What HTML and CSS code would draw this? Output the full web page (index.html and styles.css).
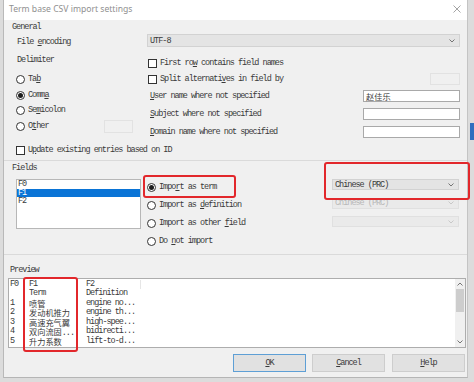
FILE: index.html
```html
<!DOCTYPE html>
<html>
<head>
<meta charset="utf-8">
<link rel="stylesheet" href="styles.css">
</head>
<body>
<div class="screen">
  <div class="dialog">
    <div class="titlebar">
      <span class="title">Term base CSV import settings</span>
      <svg class="close" width="8" height="8" viewBox="0 0 8 8"><path d="M0.5 0.5L7.5 7.5M7.5 0.5L0.5 7.5" stroke="#9a9a9a" stroke-width="0.9" fill="none"/></svg>
    </div>
    <div class="content">
      <div class="group-label general-label"><span>General</span></div>
      <div class="general">
        <div class="gcol-left">
          <div class="lrow h16 pl1"><span>File <u>e</u>ncoding</span></div>
          <div class="lrow h20 pl1"><span>Delimiter</span></div>
          <div class="lrow h18"><span class="radio"></span><span>Ta<u>b</u></span></div>
          <div class="lrow h14"><span class="radio checked"></span><span>Comm<u>a</u></span></div>
          <div class="lrow h16"><span class="radio"></span><span>Se<u>m</u>icolon</span></div>
          <div class="lrow h16"><span class="radio"></span><span>O<u>t</u>her</span><span class="mini-input other-input"></span></div>
        </div>
        <div class="gcol-right">
          <div class="select enc-select"><span class="sel-text">UTF-8</span><svg class="chev" width="6" height="4" viewBox="0 0 6 4"><path d="M0.5 0.5L3 3L5.5 0.5" stroke="#666" stroke-width="0.9" fill="none"/></svg></div>
          <div class="lrow h16 mt8"><span class="check"></span><span>First ro<u>w</u> contains field names</span></div>
          <div class="lrow h16"><span class="check"></span><span>Split alternati<u>v</u>es in field by</span><span class="mini-input split-input"></span></div>
          <div class="lrow h18 pl3"><span class="flabel"><u>U</u>ser name where not specified</span><span class="text-input"><span class="zh">赵佳乐</span></span></div>
          <div class="lrow h18 pl3"><span class="flabel"><u>S</u>ubject where not specified</span><span class="text-input"></span></div>
          <div class="lrow h18 pl3"><span class="flabel"><u>D</u>omain name where not specified</span><span class="text-input"></span></div>
        </div>
      </div>
      <div class="lrow h16 update-row"><span class="check"></span><span>U<u>p</u>date existing entries based on ID</span></div>
      <div class="sep sep-a"></div>
      <div class="group-label fields-label"><span>Fields</span></div>
      <div class="fields">
        <div class="listbox">
          <div class="item">F0</div>
          <div class="item selected">F1</div>
          <div class="item">F2</div>
        </div>
        <div class="radios">
          <div class="lrow h18"><span class="radio checked"></span><span>Impo<u>r</u>t as term</span></div>
          <div class="lrow h18"><span class="radio"></span><span>Import as <u>d</u>efinition</span></div>
          <div class="lrow h18"><span class="radio"></span><span>Import as other <u>f</u>ield</span></div>
          <div class="lrow h18"><span class="radio"></span><span>Do <u>n</u>ot import</span></div>
        </div>
        <div class="selects">
          <div class="select lang"><span class="sel-text">Chinese (PRC)</span><svg class="chev" width="6" height="4" viewBox="0 0 6 4"><path d="M0.5 0.5L3 3L5.5 0.5" stroke="#666" stroke-width="0.9" fill="none"/></svg></div>
          <div class="select lang disabled"><span class="sel-text">Chinese (PRC)</span><svg class="chev" width="6" height="4" viewBox="0 0 6 4"><path d="M0.5 0.5L3 3L5.5 0.5" stroke="#c4c4c4" stroke-width="0.9" fill="none"/></svg></div>
          <div class="select lang disabled"><span class="sel-text"></span><svg class="chev" width="6" height="4" viewBox="0 0 6 4"><path d="M0.5 0.5L3 3L5.5 0.5" stroke="#c4c4c4" stroke-width="0.9" fill="none"/></svg></div>
        </div>
      </div>
      <div class="sep sep-b"></div>
      <div class="group-label preview-label"><span>Preview</span></div>
      <div class="preview">
        <div class="pv-grid">
          <div class="pv-row head"><span class="c0">F0</span><span class="c1">F1</span><span class="c2">F2</span></div>
          <div class="pv-row"><span class="c0"></span><span class="c1">Term</span><span class="c2">Definition</span></div>
          <div class="pv-row"><span class="c0">1</span><span class="c1 zh">喷管</span><span class="c2">engine no...</span></div>
          <div class="pv-row"><span class="c0">2</span><span class="c1 zh">发动机推力</span><span class="c2">engine th...</span></div>
          <div class="pv-row"><span class="c0">3</span><span class="c1 zh">高速充气翼</span><span class="c2">high-spee...</span></div>
          <div class="pv-row"><span class="c0">4</span><span class="c1"><span class="zh">双向流固</span>...</span><span class="c2">bidirecti...</span></div>
          <div class="pv-row"><span class="c0">5</span><span class="c1 zh">升力系数</span><span class="c2">lift-to-d...</span></div>
        </div>
        <div class="scrollbar">
          <svg class="sb-arrow" width="6" height="4" viewBox="0 0 6 4"><path d="M0.5 3.5L3 1L5.5 3.5" stroke="#666" stroke-width="0.9" fill="none"/></svg>
          <div class="thumb"></div>
          <div class="sb-space"></div>
          <svg class="sb-arrow" width="6" height="4" viewBox="0 0 6 4"><path d="M0.5 0.5L3 3L5.5 0.5" stroke="#666" stroke-width="0.9" fill="none"/></svg>
        </div>
      </div>
      <div class="buttons">
        <div class="btn default"><span><u>O</u>K</span></div>
        <div class="btn cancel"><span><u>C</u>ancel</span></div>
        <div class="btn help"><span><u>H</u>elp</span></div>
      </div>
    </div>
  </div>
  <div class="bg-blue"></div>
  <div class="mark mark1"></div>
  <div class="mark mark2"></div>
  <div class="mark mark3"></div>
</div>
</body>
</html>
```
FILE: styles.css
```css
* { box-sizing: border-box; }
html, body { margin: 0; padding: 0; }
body {
  width: 474px;
  height: 382px;
  overflow: hidden;
  background: #dcdcdc;
  font-family: "Liberation Mono", "Noto Sans CJK SC", monospace;
  font-size: 8.5px;
  letter-spacing: -1px;
  color: #3a3a3a;
}
u { text-decoration: underline; text-underline-offset: 1px; }
.zh { font-family: "Noto Sans CJK SC", sans-serif; letter-spacing: 0; font-size: 8.2px; }
.screen {
  position: relative;
  width: 474px;
  height: 382px;
  padding-left: 3px;
}
.screen::before {
  content: "";
  position: absolute;
  left: 3px; top: 0; width: 1px; height: 378px;
  background: #b9b9b9;
}
.dialog {
  position: relative;
  margin-left: 1px;
  width: 464px;
  height: 378px;
  background: #f0f0f0;
  border-right: 1px solid #c4c4c4;
  border-bottom: 1px solid #b5b5b5;
}
.titlebar {
  height: 20px;
  background: #ffffff;
  display: flex;
  align-items: center;
  padding-left: 5px;
  padding-right: 6px;
  padding-bottom: 2px;
}
.title {
  font-family: "Noto Sans", sans-serif;
  font-size: 8.6px;
  letter-spacing: 0;
  color: #909090;
}
.close { margin-left: auto; }
.group-label {
  display: flex;
  align-items: center;
  padding-left: 8px;
}
.general-label { height: 14px; }
.general {
  display: flex;
  padding-left: 12px;
  height: 107px;
}
.gcol-left { width: 131px; display: flex; flex-direction: column; }
.gcol-right { width: 313px; display: flex; flex-direction: column; }
.lrow { display: flex; align-items: center; white-space: pre; }
.h14 { height: 14px; }
.h16 { height: 16px; }
.h18 { height: 18px; }
.h20 { height: 20px; }
.pl1 { padding-left: 1px; }
.pl3 { padding-left: 3px; }
.mt8 { margin-top: 8px; }
.radio {
  width: 9px; height: 9px;
  border: 1px solid #333;
  border-radius: 50%;
  background: #fff;
  margin-right: 3px;
  flex: none;
  display: flex; align-items: center; justify-content: center;
}
.radio.checked::after {
  content: "";
  width: 5px; height: 5px;
  border-radius: 50%;
  background: #1e1e1e;
}
.check {
  width: 9px; height: 9px;
  border: 1px solid #333;
  background: #fff;
  margin-left: 1px;
  margin-right: 3px;
  flex: none;
}
.mini-input {
  height: 13px;
  border: 1px solid #e2e2e2;
  background: #f0f0f0;
}
.other-input { width: 29px; margin-left: auto; margin-right: 14px; }
.split-input { width: 30px; height: 12px; margin-left: auto; }
.select {
  height: 13px;
  background: #e4e4e4;
  border: 1px solid #d2d2d2;
  display: flex;
  align-items: center;
  padding-left: 2px;
  padding-right: 4px;
}
.sel-text { color: #3a3a3a; white-space: pre; }
.select .chev { margin-left: auto; }
.flabel { flex: none; }
.text-input {
  margin-left: auto;
  width: 97px;
  height: 12px;
  background: #fff;
  border: 1px solid #a9a9a9;
  display: flex;
  align-items: center;
  padding-left: 2px;
}
.update-row { margin-top: 1px; padding-left: 11px; }
.sep { height: 1px; background: #dadada; }
.sep-a { margin-top: 2px; }
.fields-label { height: 14px; }
.fields {
  display: flex;
  height: 75px;
  padding-left: 12px;
  padding-right: 8px;
}
.listbox {
  margin-top: 4px;
  width: 125px;
  height: 50px;
  background: #fff;
  border: 1px solid #b7b7b7;
}
.item { height: 8.5px; line-height: 8.5px; padding-left: 1px; }
.item.selected { background: #0a74d6; color: #fff; }
.radios { margin-left: 6px; margin-top: 3px; display: flex; flex-direction: column; }
.selects {
  margin-left: auto;
  margin-top: 4px;
  width: 127px;
  display: flex;
  flex-direction: column;
  gap: 7.5px;
}
.select.lang { height: 11px; }
.select.disabled { background: #eaeaea; border-color: #e0e0e0; }
.select.disabled .sel-text { color: #b8b8b8; }
.sep-b { margin-top: 4px; }
.preview-label { height: 22px; padding-left: 6px; padding-top: 7px; }
.preview {
  margin-left: 4px;
  margin-top: 1px;
  width: 458px;
  height: 70px;
  background: #fff;
  border: 1px solid #adadad;
  display: flex;
  overflow: hidden;
}
.pv-grid { flex: 1; padding-top: 0.5px; padding-left: 1px; overflow: hidden; }
.pv-row { display: flex; height: 9.5px; line-height: 9.5px; white-space: pre; }
.c0 { width: 19px; flex: none; }
.c1 { width: 57px; flex: none; }
.c2 { width: 55px; flex: none; }
.head .c2 { border-right: 1px solid #e6e6e6; }
.scrollbar {
  width: 10px;
  flex: none;
  background: #f0f0f0;
  display: flex;
  flex-direction: column;
  align-items: center;
  padding-top: 3px;
  padding-bottom: 3px;
}
.thumb { width: 8px; height: 23px; background: #cdcdcd; margin-top: 3px; }
.sb-space { flex: 1; }
.buttons {
  display: flex;
  justify-content: flex-end;
  padding-right: 2px;
  margin-top: 6px;
}
.btn {
  width: 73px;
  height: 18px;
  background: #e1e1e1;
  border: 1px solid #cdcdcd;
  display: flex;
  align-items: center;
  justify-content: center;
}
.btn.default { border-color: #5e9fd5; }
.btn.cancel { margin-left: 6px; }
.btn.help { margin-left: 7px; }
.bg-blue {
  position: absolute;
  left: 470px; top: 123px;
  width: 4px; height: 17px;
  background: #2f6fbf;
}
.mark {
  position: absolute;
  border: 2px solid #e2272b;
  border-radius: 3px;
}
.mark1 { left: 143px; top: 175px; width: 93px; height: 23px; }
.mark2 { left: 324px; top: 162px; width: 146px; height: 38px; }
.mark3 { left: 23px; top: 277px; width: 55px; height: 75px; }
```
